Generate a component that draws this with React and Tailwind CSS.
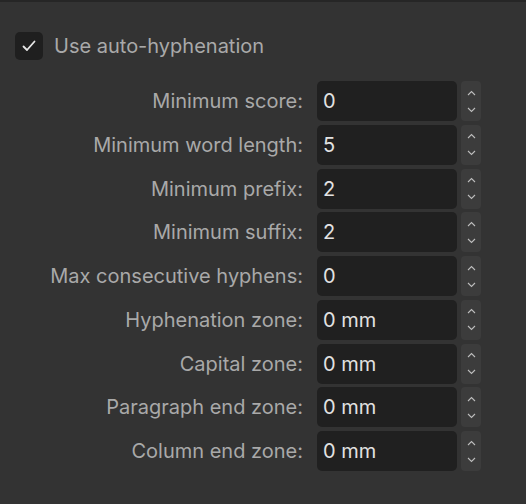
import React from "react";

const rows = [
  ["Minimum score:", "0"],
  ["Minimum word length:", "5"],
  ["Minimum prefix:", "2"],
  ["Minimum suffix:", "2"],
  ["Max consecutive hyphens:", "0"],
  ["Hyphenation zone:", "0 mm"],
  ["Capital zone:", "0 mm"],
  ["Paragraph end zone:", "0 mm"],
  ["Column end zone:", "0 mm"],
];

function Stepper() {
  return (
    <div className="w-[20px] h-full rounded-[4px] bg-[#3c3c3c] flex flex-col items-center justify-center gap-[11px]">
      <svg width="9" height="6" viewBox="0 0 9 6" fill="none">
        <path d="M1 5 L4.5 1.5 L8 5" stroke="#bdbdbd" strokeWidth="1.1" />
      </svg>
      <svg width="9" height="6" viewBox="0 0 9 6" fill="none">
        <path d="M1 1 L4.5 4.5 L8 1" stroke="#bdbdbd" strokeWidth="1.1" />
      </svg>
    </div>
  );
}

export default function App() {
  return (
    <div
      className="w-[526px] h-[504px] bg-[#333333] flex flex-col"
      style={{ fontFamily: "Inter, 'Noto Sans', sans-serif" }}
    >
      <div className="h-[2px] bg-[#262626]" />

      <div className="flex items-center pl-[15px] pt-[29px] gap-[11px]">
        <div className="w-[28px] h-[28px] rounded-[5px] bg-[#1f1f1f] flex items-center justify-center">
          <svg width="14" height="12" viewBox="0 0 14 12" fill="none">
            <path d="M1.5 6.5 L5 10 L12.5 1.5" stroke="#e6e6e6" strokeWidth="1.8" strokeLinecap="round" strokeLinejoin="round" />
          </svg>
        </div>
        <span className="text-[20px] text-[#a9a9a9]">Use auto-hyphenation</span>
      </div>

      <div className="flex flex-col gap-[3.75px] pt-[20px]">
        {rows.map(([label, value]) => (
          <div key={label} className="flex items-center h-[40px]">
            <div className="w-[303px] text-right text-[20px] text-[#a9a9a9]">
              {label}
            </div>
            <div className="ml-[14px] w-[140px] h-full rounded-[5px] bg-[#202020] flex items-center pl-[6px] text-[20px] text-[#e2e2e2]">
              {value}
            </div>
            <div className="ml-[4px] h-full">
              <Stepper />
            </div>
          </div>
        ))}
      </div>
    </div>
  );
}
